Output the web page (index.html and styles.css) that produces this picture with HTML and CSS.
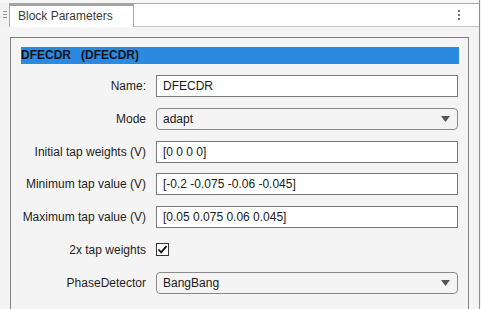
FILE: index.html
```html
<!DOCTYPE html>
<html>
<head>
<meta charset="utf-8">
<link rel="stylesheet" href="styles.css">
</head>
<body>
<div class="window">
  <div class="topstrip"></div>
  <div class="tabbar">
    <div class="grip"><span></span><span></span><span></span></div>
    <div class="tab">Block Parameters</div>
    <div class="tabfill">
      <div class="kebab"><i></i><i></i><i></i></div>
    </div>
  </div>
  <div class="content">
    <div class="panel">
      <div class="header">DFECDR&nbsp;&nbsp;&nbsp;(DFECDR)</div>
      <div class="form">
        <div class="lbl">Name:</div>
        <div class="input">DFECDR</div>

        <div class="lbl">Mode</div>
        <div class="select"><span>adapt</span><svg class="arrow" width="9" height="6" viewBox="0 0 9 6"><path d="M0 0H9L4.5 6Z"/></svg></div>

        <div class="lbl">Initial tap weights (V)</div>
        <div class="input">[0 0 0 0]</div>

        <div class="lbl">Minimum tap value (V)</div>
        <div class="input">[-0.2 -0.075 -0.06 -0.045]</div>

        <div class="lbl">Maximum tap value (V)</div>
        <div class="input">[0.05 0.075 0.06 0.045]</div>

        <div class="lbl">2x tap weights</div>
        <div class="checkcell"><div class="checkbox"><svg width="11" height="11" viewBox="0 0 11 11"><path d="M1.5 5.5L4.2 8.3L9.5 2.2" fill="none" stroke="#111" stroke-width="1.8"/></svg></div></div>

        <div class="lbl">PhaseDetector</div>
        <div class="select"><span>BangBang</span><svg class="arrow" width="9" height="6" viewBox="0 0 9 6"><path d="M0 0H9L4.5 6Z"/></svg></div>
      </div>
    </div>
  </div>
</div>
</body>
</html>
```

FILE: styles.css
```css
html, body {
  margin: 0;
  padding: 0;
}
body {
  background: #f4f4f4;
  font-family: "Liberation Sans", Arial, sans-serif;
  font-size: 12px;
  color: #1a1a1a;
}
.window {
  width: 480px;
  height: 309px;
  border-right: 1px solid #8c8c8c;
  box-sizing: border-box;
  overflow: hidden;
  background: #f4f4f4;
}
.topstrip {
  height: 3px;
  background: #f7f7f7;
}
.tabbar {
  display: flex;
  height: 24px;
}
.grip {
  width: 9px;
  background: #f2f2f2;
  display: flex;
  flex-direction: column;
  gap: 2px;
  padding: 8px 0 0 3px;
  box-sizing: border-box;
}
.grip span {
  display: block;
  width: 4px;
  height: 1px;
  background: #9a9a9a;
}
.tab {
  width: 125px;
  box-sizing: border-box;
  background: #ffffff;
  border-left: 1px solid #a8a8a8;
  border-right: 1px solid #a8a8a8;
  border-top: 3px solid #a4a4a4;
  padding-left: 8px;
  line-height: 20px;
  color: #3a3a3a;
  font-size: 12px;
}
.tabfill {
  flex: 1;
  position: relative;
  background: #ffffff;
  border-top: 1px solid #a8a8a8;
  border-bottom: 1px solid #c6c6c6;
}
.kebab {
  position: absolute;
  right: 19px;
  top: 6px;
  display: flex;
  flex-direction: column;
  gap: 2px;
}
.kebab i {
  display: block;
  width: 2px;
  height: 2px;
  background: #707070;
}
.content {
  padding: 10px 0 0 10px;
}
.panel {
  width: 459px;
  height: 280px;
  box-sizing: border-box;
  border: 1px solid #7f7f7f;
  border-bottom: none;
  padding: 9px 9px 0 10px;
  background: #f4f4f4;
}
.header {
  height: 17px;
  line-height: 17px;
  background: #2b8ae0;
  color: #141414;
  font-weight: bold;
  font-size: 12px;
  white-space: pre;
}
.form {
  display: grid;
  grid-template-columns: 125px 302px;
  column-gap: 10px;
  row-gap: 10.8px;
  margin-top: 11px;
  align-items: center;
}
.lbl {
  text-align: right;
  color: #1e1e1e;
  white-space: nowrap;
}
.input {
  height: 22px;
  box-sizing: border-box;
  border: 1px solid #7a7a7a;
  background: #ffffff;
  padding: 0 6px;
  line-height: 20px;
  white-space: nowrap;
}
.select {
  height: 22px;
  box-sizing: border-box;
  border: 1px solid #8a8a8a;
  border-radius: 4px;
  background: #f4f4f4;
  padding: 0 7px 0 6px;
  display: flex;
  align-items: center;
  justify-content: space-between;
}
.arrow path {
  fill: #555555;
}
.checkcell {
  height: 22px;
  display: flex;
  align-items: center;
}
.checkbox {
  width: 13px;
  height: 13px;
  box-sizing: border-box;
  border: 1px solid #333333;
  background: #ffffff;
  display: flex;
  align-items: center;
  justify-content: center;
}
.checkbox svg {
  display: block;
}
```
